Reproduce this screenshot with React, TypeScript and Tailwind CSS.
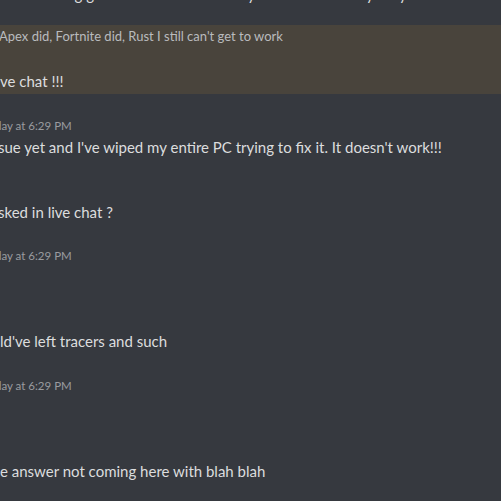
const text = "text-[#dcddde] text-[15px] leading-[22px] whitespace-nowrap";
const stamp = "text-[#9a9ca0] text-[11.5px] leading-[20px] h-[20px] whitespace-nowrap -ml-[5px]";

export default function App() {
  return (
    <div
      className="w-[501px] h-[501px] overflow-hidden bg-[#36393f]"
      style={{ fontFamily: "Lato, 'Open Sans', sans-serif" }}
    >
      <div className="flex flex-col">
        {/* previous message, mostly scrolled out */}
        <div className={`${text} h-[22px] -mt-[17px] pl-[4px]`}>
          and nothing got fixed so the issue stays broken for everybody else
        </div>

        {/* highlighted reply */}
        <div className="mt-[20px] bg-[#49443c] pb-[2px]">
          <div className="text-[#b9bbbe] text-[13px] leading-[22px] h-[22px] whitespace-nowrap -ml-[1px]">
            Apex did, Fortnite did, Rust I still can't get to work
          </div>
          <div className={`${text} h-[22px] mt-[23px]`}>ve chat !!!</div>
        </div>

        <div className={`${stamp} mt-[22px]`}>day at 6:29 PM</div>
        <div className={`${text} h-[22px] -ml-[2px]`}>
          sue yet and I've wiped my entire PC trying to fix it. It doesn't work!!!
        </div>
        <div className={`${text} h-[22px] mt-[43px] -ml-[2px]`}>sked in live chat ?</div>

        <div className={`${stamp} mt-[23px]`}>day at 6:29 PM</div>
        <div className={`${text} h-[22px] mt-[64px]`}>ld've left tracers and such</div>

        <div className={`${stamp} mt-[24px]`}>day at 6:29 PM</div>
        <div className={`${text} h-[22px] mt-[64px]`}>e answer not coming here with blah blah</div>
      </div>
    </div>
  );
}
